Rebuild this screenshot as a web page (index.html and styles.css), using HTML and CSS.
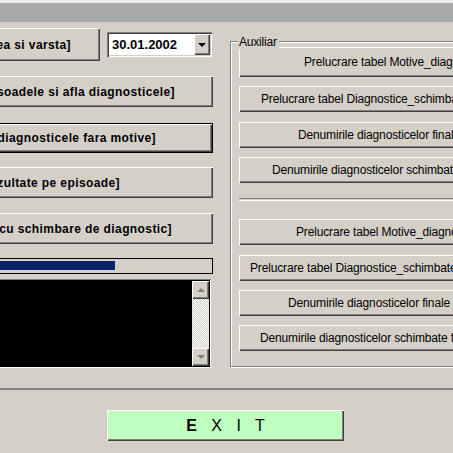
FILE: index.html
```html
<!DOCTYPE html>
<html lang="ro">
<head>
    <meta charset="UTF-8">
    <title>Prelucrare diagnostice</title>
    <link rel="stylesheet" href="styles.css">
</head>
<body>
    <div class="titlebar"></div>

    <div class="main">
      <div class="left">
          <div class="row-date">
              <button class="btn bold b1">ea si varsta]</button>
              <div class="combo">
                  <span class="combo-text">30.01.2002</span>
                  <span class="combo-arrow"><span class="tri"></span></span>
              </div>
          </div>
          <button class="btn bold b2">soadele si afla diagnosticele]</button>
          <button class="btn bold b3 default">diagnosticele fara motive]</button>
          <button class="btn bold b4">zultate pe episoade]</button>
          <button class="btn bold b5">cu schimbare de diagnostic]</button>

          <div class="progress"><div class="progress-fill"></div></div>

          <div class="log">
              <div class="log-text"></div>
              <div class="scroll">
                  <span class="sbtn"><span class="tri up"></span></span>
                  <span class="track"></span>
                  <span class="sbtn"><span class="tri"></span></span>
              </div>
          </div>
      </div>

      <div class="group">
          <span class="legend">Auxiliar</span>
          <button class="btn aux r1 tall">Prelucrare tabel Motive_diagnostice</button>
          <button class="btn aux r2">Prelucrare tabel Diagnostice_schimbate</button>
          <button class="btn aux r3">Denumirile diagnosticelor finale</button>
          <button class="btn aux r4">Denumirile diagnosticelor schimbate</button>
          <div class="sep"></div>
          <button class="btn aux r5">Prelucrare tabel Motive_diagnostice</button>
          <button class="btn aux r6">Prelucrare tabel Diagnostice_schimbate</button>
          <button class="btn aux r7">Denumirile diagnosticelor finale •</button>
          <button class="btn aux r8">Denumirile diagnosticelor schimbate f</button>
      </div>
    </div>

    <div class="hline"></div>

    <div class="exit-row">
        <button class="exit"><b>E</b> X I T</button>
    </div>

    <div class="bottom"></div>
</body>
</html>
```

FILE: styles.css
```css
  body {
      margin: 0;
      width: 453px;
      height: 453px;
      overflow: hidden;
      background-color: #d4d0c8;
      font-family: "Liberation Sans", Arial, sans-serif;
      color: #000;
  }

  .titlebar {
      height: 19px;
      border-top: 3px solid #ececec;
      background-color: #a8a8a8;
  }

  .main {
      display: flex;
      height: 346px;
      padding-top: 6px;
  }

  /* left column, cut on the left side */
  .left {
      width: 233px;
      margin-left: -20px;
      display: flex;
      flex-direction: column;
      flex-shrink: 0;
  }

  .btn {
      display: block;
      height: 31px;
      padding: 0;
      border: none;
      background-color: #d4d0c8;
      box-shadow: inset 1px 1px 0 #fff, inset -1px -1px 0 #404040, inset -2px -2px 0 #808080;
      font-family: "Liberation Sans", Arial, sans-serif;
      color: #000;
      white-space: nowrap;
      overflow: hidden;
  }

  .bold {
      font-size: 12px;
      font-weight: bold;
      letter-spacing: 0.4px;
      text-align: right;
      width: 233px;
      margin-top: 15px;
  }

  .row-date {
      display: flex;
      align-items: center;
      height: 33px;
  }

  .b1 { width: 120px; height: 33px; margin-top: 0; padding-right: 29px; }
  .b2 { padding-right: 38px; }
  .b3 { padding-right: 57px; margin-top: 16px; height: 30px; }
  .b4 { padding-right: 93px; margin-top: 14px; }
  .b5 { padding-right: 41px; }

  .default {
      box-shadow: inset 0 0 0 1px #000, inset 2px 2px 0 #fff, inset -2px -2px 0 #404040, inset -3px -3px 0 #808080;
  }

  .combo {
      display: flex;
      align-items: center;
      justify-content: space-between;
      width: 101px;
      height: 21px;
      margin-left: 7px;
      padding: 2px;
      background-color: #fff;
      box-shadow: inset 1px 1px 0 #808080, inset 2px 2px 0 #404040, inset -1px -1px 0 #fff, inset -2px -2px 0 #d4d0c8;
  }

  .combo-text {
      padding-left: 3px;
      font-size: 13px;
      font-weight: bold;
  }

  .combo-arrow {
      display: flex;
      align-items: center;
      justify-content: center;
      width: 16px;
      height: 21px;
      background-color: #d4d0c8;
      box-shadow: inset 1px 1px 0 #fff, inset -1px -1px 0 #404040, inset -2px -2px 0 #808080;
  }

  .tri {
      width: 0;
      height: 0;
      border-left: 4px solid transparent;
      border-right: 4px solid transparent;
      border-top: 4px solid #000;
  }

  .progress {
      height: 12px;
      margin-top: 14px;
      padding: 2px 0 0 0;
      border: 1px solid #000;
      border-left: none;
      background-color: #d4d0c8;
  }

  .progress-fill {
      width: 135px;
      height: 9px;
      background-color: #0a246a;
  }

  .log {
      display: flex;
      width: 231px;
      height: 89px;
      margin-top: 5px;
      box-shadow: inset 0 1px 0 #808080, inset -1px -1px 0 #fff;
      background-color: #000;
  }

  .log-text {
      flex: 1;
  }

  .scroll {
      display: flex;
      flex-direction: column;
      width: 17px;
      margin: 2px 2px 2px 0;
      background: conic-gradient(#fff 25%, #d4d0c8 0 50%, #fff 0 75%, #d4d0c8 0) 0 0 / 2px 2px;
  }

  .sbtn {
      display: flex;
      align-items: center;
      justify-content: center;
      height: 18px;
      background-color: #d4d0c8;
      box-shadow: inset 1px 1px 0 #fff, inset -1px -1px 0 #404040, inset -2px -2px 0 #808080;
  }

  .sbtn .tri {
      border-top-color: #808080;
  }

  .sbtn .up {
      border-top: none;
      border-bottom: 4px solid #808080;
  }

  .track {
      flex: 1;
  }

  /* Auxiliar group */
  .group {
      position: relative;
      flex-shrink: 0;
      width: 300px;
      height: 319px;
      margin: 13px 0 0 17px;
      padding: 5px 0 0 8px;
      border: 1px solid #808080;
      box-shadow: 1px 1px 0 #fff, inset 1px 1px 0 #fff;
  }

  .legend {
      position: absolute;
      top: -7px;
      left: 7px;
      padding: 0 2px 0 1px;
      background-color: #d4d0c8;
      font-size: 12px;
      letter-spacing: -0.2px;
  }

  .aux {
      width: 300px;
      height: 26px;
      margin-top: 9px;
      text-align: left;
      font-size: 12px;
      letter-spacing: -0.15px;
  }

  .tall { height: 30px; margin-top: 0; }
  .r1 { padding-left: 65px; }
  .r2 { padding-left: 22px; }
  .r3 { padding-left: 59px; margin-top: 10px; }
  .r4 { padding-left: 33px; }
  .r5 { padding-left: 57px; margin-top: 18px; }
  .r6 { padding-left: 11px; margin-top: 10px; }
  .r7 { padding-left: 49px; }
  .r8 { padding-left: 21px; }

  .sep {
      height: 1px;
      margin-top: 15px;
      border-top: 1px solid #808080;
      border-bottom: 1px solid #fff;
  }

  .hline {
      height: 1px;
      margin-top: 14px;
      border-top: 2px solid #808080;
  }

  .exit-row {
      display: flex;
      padding: 19px 0 0 107px;
      height: 44px;
  }

  .exit {
      width: 237px;
      height: 31px;
      padding: 0 0 0 5px;
      border: none;
      background-color: #bfffbf;
      box-shadow: inset 1px 1px 0 #fff, inset -1px -1px 0 #404040, inset -2px -2px 0 #808080;
      font-family: "Liberation Sans", Arial, sans-serif;
      font-size: 16px;
      letter-spacing: 5px;
  }

  .bottom {
      height: 5px;
      background-color: #7a7a7a;
  }
```
